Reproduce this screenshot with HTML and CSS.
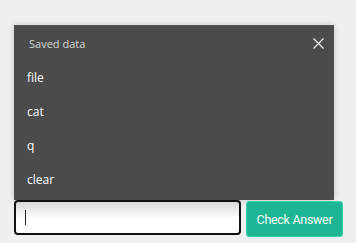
FILE: index.html
```html
<!DOCTYPE html>
<html>
<head>
<meta charset="utf-8">
<link rel="stylesheet" href="styles.css">
</head>
<body>
<div class="page">
  <div class="panel">
    <div class="panel-head">
      <span class="panel-title">Saved data</span>
      <button class="close" aria-label="Close">
        <svg width="11" height="11" viewBox="0 0 11 11"><path d="M0.5 0.5L10.5 10.5M10.5 0.5L0.5 10.5" stroke="#f2f2f2" stroke-width="1.2" fill="none"/></svg>
      </button>
    </div>
    <ul class="items">
      <li>file</li>
      <li>cat</li>
      <li>q</li>
      <li>clear</li>
    </ul>
  </div>
  <div class="answer-row">
    <div class="answer-input" role="textbox"><span class="caret"></span></div>
    <button class="check">Check Answer</button>
  </div>
</div>
</body>
</html>
```
FILE: styles.css
```css
html, body {
  margin: 0;
  padding: 0;
  background: #eff0f2;
}
.page {
  padding: 25px 0 0 14px;
  width: 330px;
}
.panel {
  width: 320px;
  height: 175px;
  background: #4b4b4b;
  border-top: 1px solid #565656;
  box-sizing: border-box;
  box-shadow: 0 0 7px rgba(0,0,0,0.18);
  font-family: "Open Sans", "Noto Sans", sans-serif;
}
.panel-head {
  height: 34px;
  display: flex;
  align-items: center;
  justify-content: space-between;
  padding: 0 10px 0 15px;
  margin-bottom: 1px;
}
.panel-title {
  color: #d8d8d8;
  font-size: 11px;
}
.close {
  background: none;
  border: 0;
  padding: 0;
  width: 11px;
  height: 11px;
  display: flex;
}
.items {
  list-style: none;
  margin: 0;
  padding: 0;
}
.items li {
  height: 34px;
  line-height: 34px;
  padding-left: 13px;
  color: #ffffff;
  font-size: 12px;
}
.answer-row {
  display: flex;
  align-items: flex-start;
  gap: 5px;
}
.answer-input {
  width: 227px;
  height: 35px;
  box-sizing: border-box;
  border: 2px solid #111;
  border-radius: 4px;
  background: linear-gradient(#d9d9d9, #ffffff 55%, #ffffff);
  display: flex;
  align-items: center;
  padding-left: 9px;
}
.caret {
  width: 1px;
  height: 15px;
  background: #222;
}
.check {
  margin-top: 1px;
  width: 97px;
  height: 36px;
  background: #1db593;
  border: 1px solid #3cd0ad;
  border-radius: 3px;
  color: #f4fffb;
  font-family: Roboto, "Liberation Sans", sans-serif;
  font-size: 12.5px;
  letter-spacing: -0.3px;
  padding: 0;
}
```
